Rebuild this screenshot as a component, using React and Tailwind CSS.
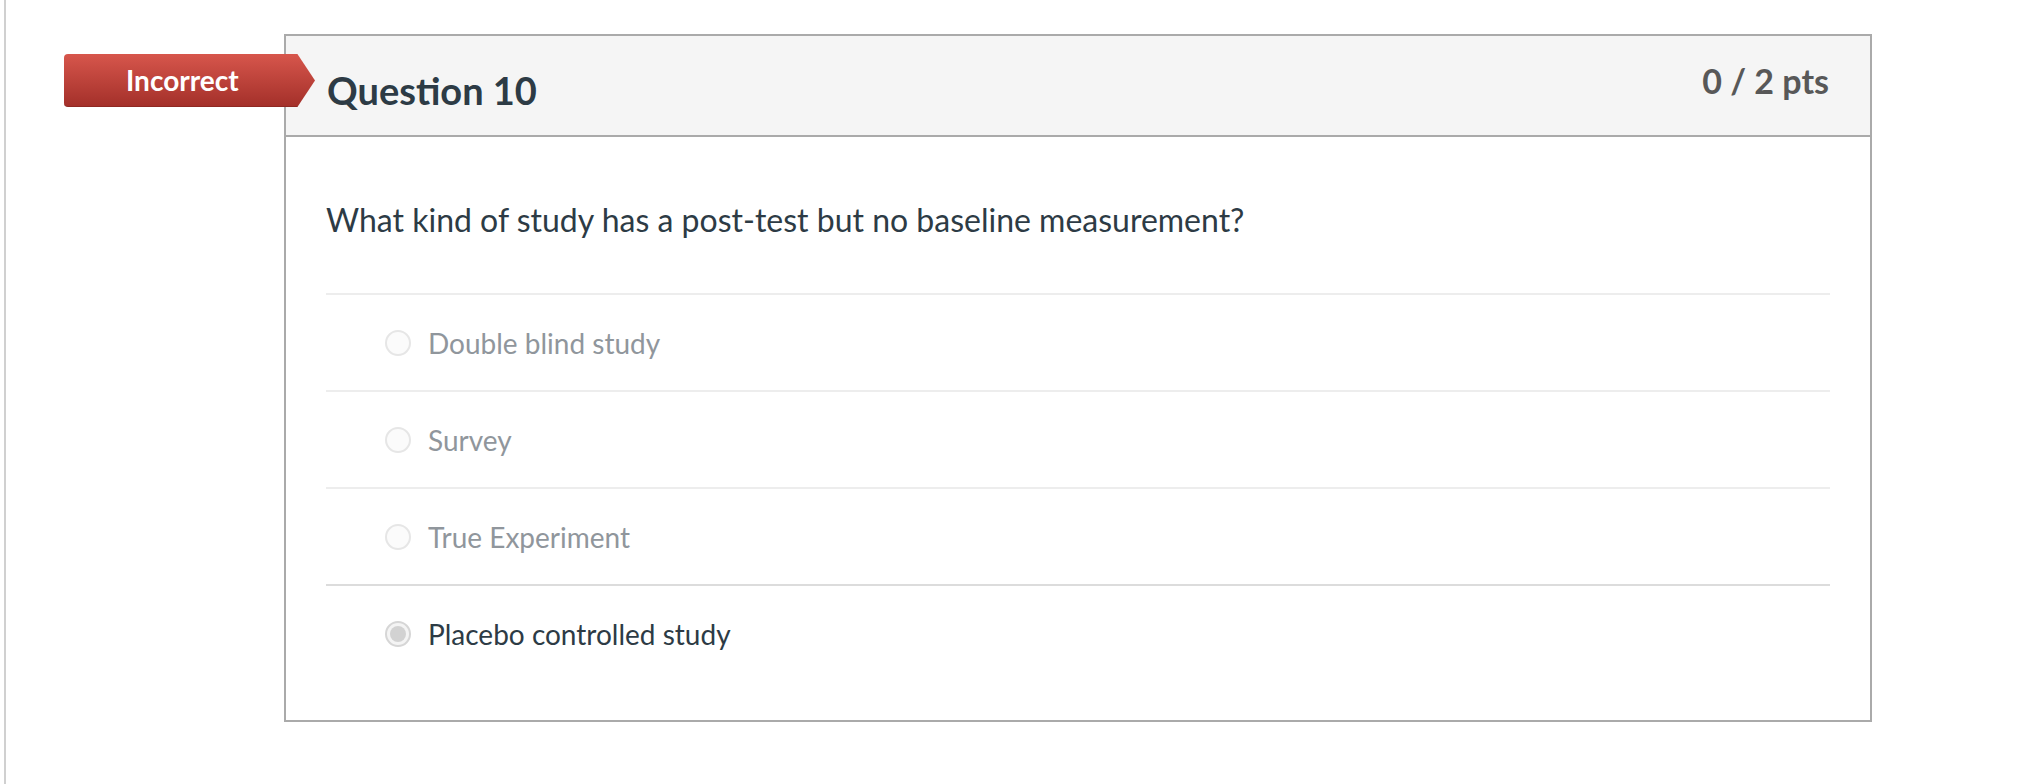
import React from 'react';

const ANSWERS = [
  { id: 'a1', text: 'Double blind study', selected: false },
  { id: 'a2', text: 'Survey', selected: false },
  { id: 'a3', text: 'True Experiment', selected: false },
  { id: 'a4', text: 'Placebo controlled study', selected: true },
];

const Radio = ({ checked }) =>
  checked ? (
    <span className="flex h-[26px] w-[26px] shrink-0 items-center justify-center rounded-full border-2 border-[#d6d6d6] bg-[#f4f4f4]">
      <span className="h-[16px] w-[16px] rounded-full bg-[#d2d2d2]" />
    </span>
  ) : (
    <span className="h-[26px] w-[26px] shrink-0 rounded-full border-2 border-[#e6e6e6] bg-[#fbfbfb]" />
  );

const AnswerRow = ({ answer, dark }) => (
  <div
    className={
      'flex h-[97px] items-center gap-[17px] border-t-2 pl-[59px] ' +
      (dark ? 'border-[#dcdcdc]' : 'border-[#ededed]')
    }
  >
    <Radio checked={answer.selected} />
    <span
      className={
        'text-[28px] leading-none ' + (answer.selected ? 'text-[#2d3b45]' : 'text-[#90969c]')
      }
    >
      {answer.text}
    </span>
  </div>
);

export default function App() {
  return (
    <div className="h-[784px] w-full bg-white pl-[4px] font-['Lato','Open_Sans',sans-serif]">
      <div className="h-full border-l-2 border-[#d0d0d0] pl-[278px] pt-[34px]">
        <div className="relative w-[1588px] border-2 border-[#aaaaaa] bg-white">
          {/* result arrow */}
          <div className="absolute left-[-222px] top-[18px] flex h-[53px] w-[251px] items-center rounded-l-[4px] border-b border-[#8f2822] bg-gradient-to-b from-[#d7564c] to-[#a4302a] pl-[62px] [clip-path:polygon(0_0,93%_0,100%_50%,93%_100%,0_100%)]">
            <span className="text-[28px] font-bold leading-none text-white">Incorrect</span>
          </div>

          <div className="flex h-[101px] items-start justify-between border-b-2 border-[#aaaaaa] bg-[#f5f5f5] px-[41px]">
            <h2 className="pt-[35px] text-[38px] font-bold leading-none text-[#2d3b45]">Question 10</h2>
            <span className="pt-[28px] text-[34px] font-bold leading-none text-[#585858]">0 / 2 pts</span>
          </div>

          <div className="px-[40px] pb-[39px]">
            <div className="h-[156px] pt-[67px]">
              <p className="text-[32px] leading-none text-[#2d3b45]">
                What kind of study has a post-test but no baseline measurement?
              </p>
            </div>
            {ANSWERS.map((a, i) => (
              <AnswerRow key={a.id} answer={a} dark={i === 3} />
            ))}
          </div>
        </div>
      </div>
    </div>
  );
}
